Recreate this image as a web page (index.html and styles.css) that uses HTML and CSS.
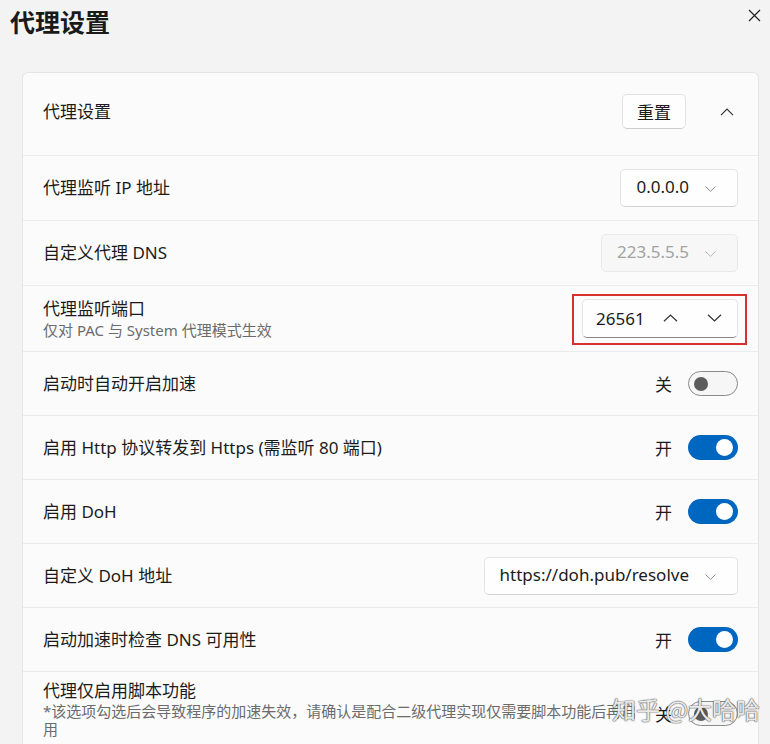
FILE: index.html
```html
<!DOCTYPE html>
<html lang="zh-CN">
<head>
<meta charset="utf-8">
<title>代理设置</title>
<link rel="stylesheet" href="styles.css">
</head>
<body>
<header class="topbar">
  <h1 class="page-title">代理设置</h1>
  <button class="close-btn" aria-label="关闭">
    <svg width="13" height="13" viewBox="0 0 13 13"><path d="M1 1L12 12M12 1L1 12" stroke="#222" stroke-width="1.2" fill="none"/></svg>
  </button>
</header>

<section class="card">
  <div class="card-head">
    <span class="row-title">代理设置</span>
    <div class="controls">
      <button class="btn">重置</button>
      <span class="expander">
        <svg width="14" height="8" viewBox="0 0 14 8"><path d="M1 7.2L7 1.2L13 7.2" stroke="#333" stroke-width="1.2" fill="none"/></svg>
      </span>
    </div>
  </div>

  <div class="row r65">
    <span class="row-title">代理监听 IP 地址</span>
    <div class="combo">
      <span class="combo-text">0.0.0.0</span>
      <svg class="chev" width="11" height="6" viewBox="0 0 11 6"><path d="M0.5 0.5L5.5 5.3L10.5 0.5" stroke="#8a8a8a" stroke-width="1" fill="none"/></svg>
    </div>
  </div>

  <div class="row r65">
    <span class="row-title">自定义代理 DNS</span>
    <div class="combo disabled">
      <span class="combo-text">223.5.5.5</span>
      <svg class="chev" width="11" height="6" viewBox="0 0 11 6"><path d="M0.5 0.5L5.5 5.3L10.5 0.5" stroke="#b5b5b5" stroke-width="1" fill="none"/></svg>
    </div>
  </div>

  <div class="row r66">
    <div class="row-text">
      <span class="row-title">代理监听端口</span>
      <span class="row-desc">仅对 PAC 与 System 代理模式生效</span>
    </div>
    <div class="highlight">
      <div class="numbox">
        <span class="num-text">26561</span>
        <span class="num-btn">
          <svg width="15" height="8" viewBox="0 0 15 8"><path d="M1 7.3L7.5 1L14 7.3" stroke="#333" stroke-width="1.2" fill="none"/></svg>
        </span>
        <span class="num-btn">
          <svg width="15" height="8" viewBox="0 0 15 8"><path d="M1 0.7L7.5 7L14 0.7" stroke="#333" stroke-width="1.2" fill="none"/></svg>
        </span>
      </div>
    </div>
  </div>

  <div class="row">
    <span class="row-title">启动时自动开启加速</span>
    <div class="switch-wrap">
      <span class="switch-label">关</span>
      <span class="switch off"><span class="knob"></span></span>
    </div>
  </div>

  <div class="row">
    <span class="row-title">启用 Http 协议转发到 Https (需监听 80 端口)</span>
    <div class="switch-wrap">
      <span class="switch-label">开</span>
      <span class="switch on"><span class="knob"></span></span>
    </div>
  </div>

  <div class="row">
    <span class="row-title">启用 DoH</span>
    <div class="switch-wrap">
      <span class="switch-label">开</span>
      <span class="switch on"><span class="knob"></span></span>
    </div>
  </div>

  <div class="row">
    <span class="row-title">自定义 DoH 地址</span>
    <div class="combo">
      <span class="combo-text">https://doh.pub/resolve</span>
      <svg class="chev" width="11" height="6" viewBox="0 0 11 6"><path d="M0.5 0.5L5.5 5.3L10.5 0.5" stroke="#8a8a8a" stroke-width="1" fill="none"/></svg>
    </div>
  </div>

  <div class="row">
    <span class="row-title">启动加速时检查 DNS 可用性</span>
    <div class="switch-wrap">
      <span class="switch-label">开</span>
      <span class="switch on"><span class="knob"></span></span>
    </div>
  </div>

  <div class="row row-top">
    <div class="row-text">
      <span class="row-title">代理仅启用脚本功能</span>
      <span class="row-desc wide">*该选项勾选后会导致程序的加速失效，请确认是配合二级代理实现仅需要脚本功能后再启用</span>
    </div>
    <div class="switch-wrap">
      <span class="switch-label">关</span>
      <span class="switch off"><span class="knob"></span></span>
    </div>
  </div>
</section>

<div class="watermark">知乎 @大哈哈</div>
</body>
</html>
```

FILE: styles.css
```css
* { box-sizing: border-box; }

html, body {
  margin: 0;
  padding: 0;
  height: 744px;
  overflow: hidden;
}

body {
  background: #f3f3f3;
  font-family: "Noto Sans", "Noto Sans CJK SC", sans-serif;
  color: #1b1b1b;
  position: relative;
}

.topbar {
  height: 72px;
  display: flex;
  justify-content: space-between;
  align-items: flex-start;
  padding: 0 9px 0 10px;
}

.page-title {
  margin: 0;
  font-size: 25px;
  line-height: 42px;
  font-weight: 700;
  color: #1a1a1a;
  font-family: "Noto Sans CJK SC", sans-serif;
}

.close-btn {
  border: 0;
  background: transparent;
  padding: 0;
  margin-top: 9px;
  width: 13px;
  height: 13px;
  display: flex;
}

.card {
  margin-left: 22px;
  width: 737px;
  background: #fbfbfb;
  border: 1px solid #e5e5e5;
  border-bottom: 0;
  border-radius: 6px 6px 0 0;
}

.card-head {
  height: 82px;
  display: flex;
  align-items: center;
  justify-content: space-between;
  padding: 0 20px 5px 20px;
}

.controls {
  display: flex;
  align-items: center;
}

.btn {
  width: 64px;
  height: 35px;
  border: 1px solid #e2e2e2;
  border-bottom-color: #cdcdcd;
  border-radius: 5px;
  background: #fefefe;
  font-family: "Noto Sans CJK SC", sans-serif;
  font-size: 17px;
  color: #1b1b1b;
  padding: 0;
}

.expander {
  width: 52px;
  display: flex;
  justify-content: flex-end;
  padding-right: 4px;
}

.row {
  height: 64px;
  display: flex;
  align-items: center;
  justify-content: space-between;
  padding: 0 20px;
  border-top: 1px solid #ebebeb;
}

.r65 { height: 65px; }
.r66 { height: 66px; }

.row-top {
  height: 90px;
  align-items: flex-start;
  padding-top: 8px;
}

.row-top .switch-wrap { margin-top: 21px; }

.row-title {
  font-size: 17px;
  line-height: 22px;
  color: #1b1b1b;
  white-space: nowrap;
}

.row-text {
  display: flex;
  flex-direction: column;
}

.row-desc {
  font-size: 15px;
  line-height: 20px;
  color: #6b6b6b;
}

.row-desc.wide {
  width: 600px;
  line-height: 18px;
}

.combo {
  height: 38px;
  display: flex;
  align-items: center;
  gap: 16px;
  padding: 0 21px 0 15px;
  background: #fefefe;
  border: 1px solid #e4e4e4;
  border-bottom-color: #d2d2d2;
  border-radius: 5px;
}

.combo-text {
  font-size: 17px;
  color: #1b1b1b;
  margin-top: -3px;
}

.chev { margin-top: 2px; }

.combo.disabled {
  background: #f7f7f7;
  border-color: #e9e9e9;
}

.combo.disabled .combo-text { color: #a3a3a3; }

.highlight {
  border: 2px solid #d8302d;
  padding: 3px 7px 5px 8px;
  margin-right: -9px;
  margin-top: 1px;
}

.numbox {
  width: 156px;
  height: 39px;
  display: flex;
  align-items: center;
  padding-left: 13px;
  background: #fefefe;
  border: 1px solid #e4e4e4;
  border-bottom: 1px solid #8a8a8a;
  border-radius: 5px;
}

.num-text {
  font-size: 17px;
  width: 52px;
  color: #1b1b1b;
}

.num-btn {
  width: 44px;
  display: flex;
  justify-content: center;
}

.switch-wrap {
  display: flex;
  align-items: center;
  gap: 16px;
}

.switch-label {
  font-size: 17px;
  font-family: "Noto Sans CJK SC", sans-serif;
  color: #1b1b1b;
}

.switch {
  width: 50px;
  height: 25px;
  border-radius: 13px;
  display: flex;
  align-items: center;
}

.switch.on {
  background: #0067c0;
  justify-content: flex-end;
  padding-right: 5px;
}

.switch.on .knob {
  width: 17px;
  height: 17px;
  border-radius: 50%;
  background: #ffffff;
}

.switch.off {
  border: 1px solid #8a8a8a;
  background: #f6f6f6;
  padding-left: 5px;
}

.switch.off .knob {
  width: 14px;
  height: 14px;
  border-radius: 50%;
  background: #5c5c5c;
}

.watermark {
  position: absolute;
  left: 612px;
  top: 693px;
  font-family: "Noto Sans CJK SC", sans-serif;
  font-size: 24px;
  line-height: 32px;
  color: rgba(255, 255, 255, 0.9);
  text-shadow: 0 0 1px #555, 0 0 1px #555, 0 0 2px rgba(0,0,0,0.4);
  white-space: nowrap;
}
```
